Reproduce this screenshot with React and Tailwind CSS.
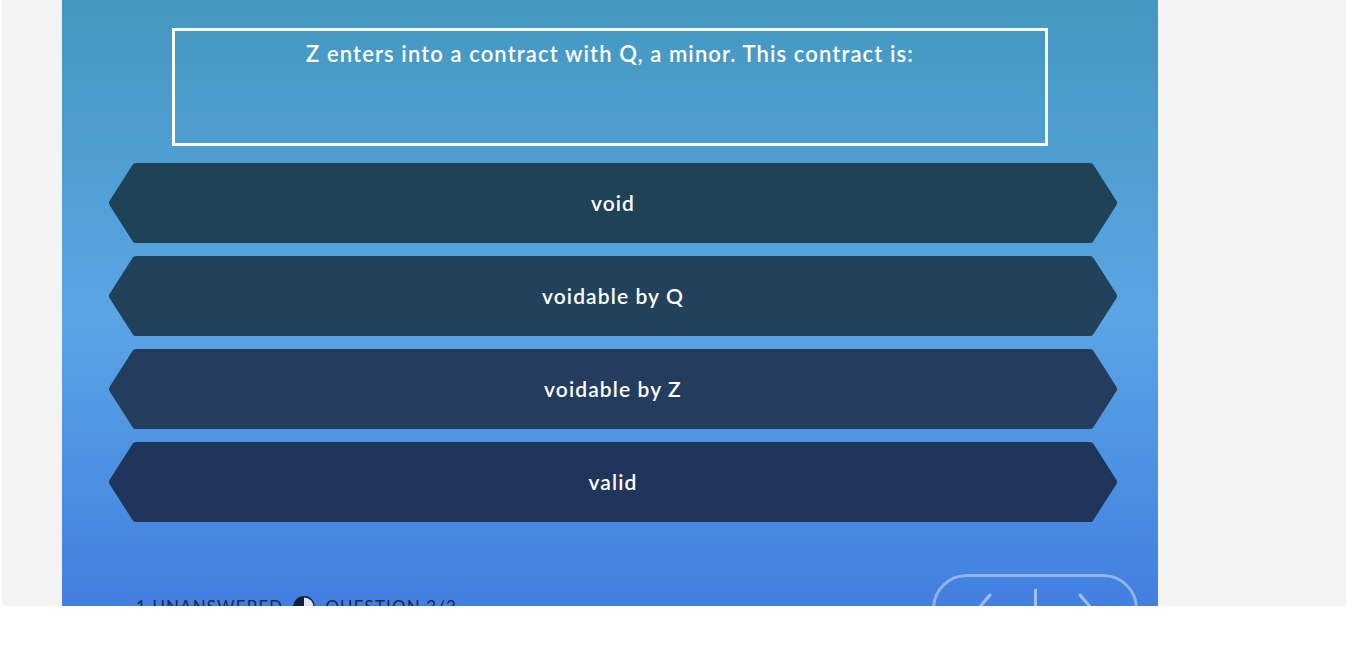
import React from 'react';

const options = [
  { label: 'void', color: '#1f4257' },
  { label: 'voidable by Q', color: '#22425c' },
  { label: 'voidable by Z', color: '#243d5e' },
  { label: 'valid', color: '#1f365a' },
];

const OptionButton = ({ label, color }) => (
  <button className="relative w-[1008px] h-[80px] flex items-center justify-center text-white text-[21px] font-semibold tracking-[1.1px]">
    <svg className="absolute inset-0" width="1008" height="80" viewBox="0 0 1008 80">
      <polygon
        points="4,40 27,4 981,4 1004,40 981,76 27,76"
        fill={color}
        stroke={color}
        strokeWidth="8"
        strokeLinejoin="round"
      />
    </svg>
    <span className="relative">{label}</span>
  </button>
);

const PieIcon = () => (
  <svg width="22" height="22" viewBox="0 0 22 22">
    <circle cx="11" cy="11" r="11" fill="#13203a" />
    <path d="M11 11 L11 1.5 A9.5 9.5 0 0 1 20.5 11 Z" fill="#dfe7f7" />
  </svg>
);

export default function App() {
  return (
    <div className="w-[1346px] h-[654px] bg-white" style={{ fontFamily: 'Lato, "Open Sans", sans-serif' }}>
      <div className="ml-[2px] h-[606px] overflow-hidden bg-[#f3f3f3] pl-[60px]">
        <div className="w-[1096px] h-[700px] bg-linear-to-b from-[#4398bf] via-[#5aa5e5] via-45% to-[#3c72de] pt-[28px]">
          {/* Question */}
          <div className="mx-auto w-[876px] h-[118px] border-[3px] border-white pt-[8px]">
            <p className="text-center text-white text-[22px] font-semibold leading-[30px] tracking-[1.1px]">
              Z enters into a contract with Q, a minor. This contract is:
            </p>
          </div>

          {/* Answers */}
          <div className="ml-[47px] mt-[17px] flex flex-col gap-[13px]">
            {options.map((o) => (
              <OptionButton key={o.label} label={o.label} color={o.color} />
            ))}
          </div>

          {/* Footer */}
          <div className="mt-[52px] flex items-start justify-between pl-[74px] pr-[20px]">
            <div className="mt-[20px] flex items-center gap-[10px] text-[17px] text-[#1a2942] tracking-[1.1px] uppercase">
              <span>1 Unanswered</span>
              <PieIcon />
              <span>Question 3/3</span>
            </div>
            <div className="relative w-[206px] h-[70px] rounded-full border-[3px] border-white/40 flex items-center">
              <div className="flex-1 flex justify-center">
                <svg width="24" height="36" viewBox="0 0 24 36" fill="none" stroke="rgba(255,255,255,0.5)" strokeWidth="3" strokeLinecap="round">
                  <path d="M18 4 L6 18 L18 32" />
                </svg>
              </div>
              <div className="w-[3px] h-[40px] bg-white/50" />
              <div className="flex-1 flex justify-center">
                <svg width="24" height="36" viewBox="0 0 24 36" fill="none" stroke="rgba(255,255,255,0.5)" strokeWidth="3" strokeLinecap="round">
                  <path d="M6 4 L18 18 L6 32" />
                </svg>
              </div>
            </div>
          </div>
        </div>
      </div>
    </div>
  );
}
